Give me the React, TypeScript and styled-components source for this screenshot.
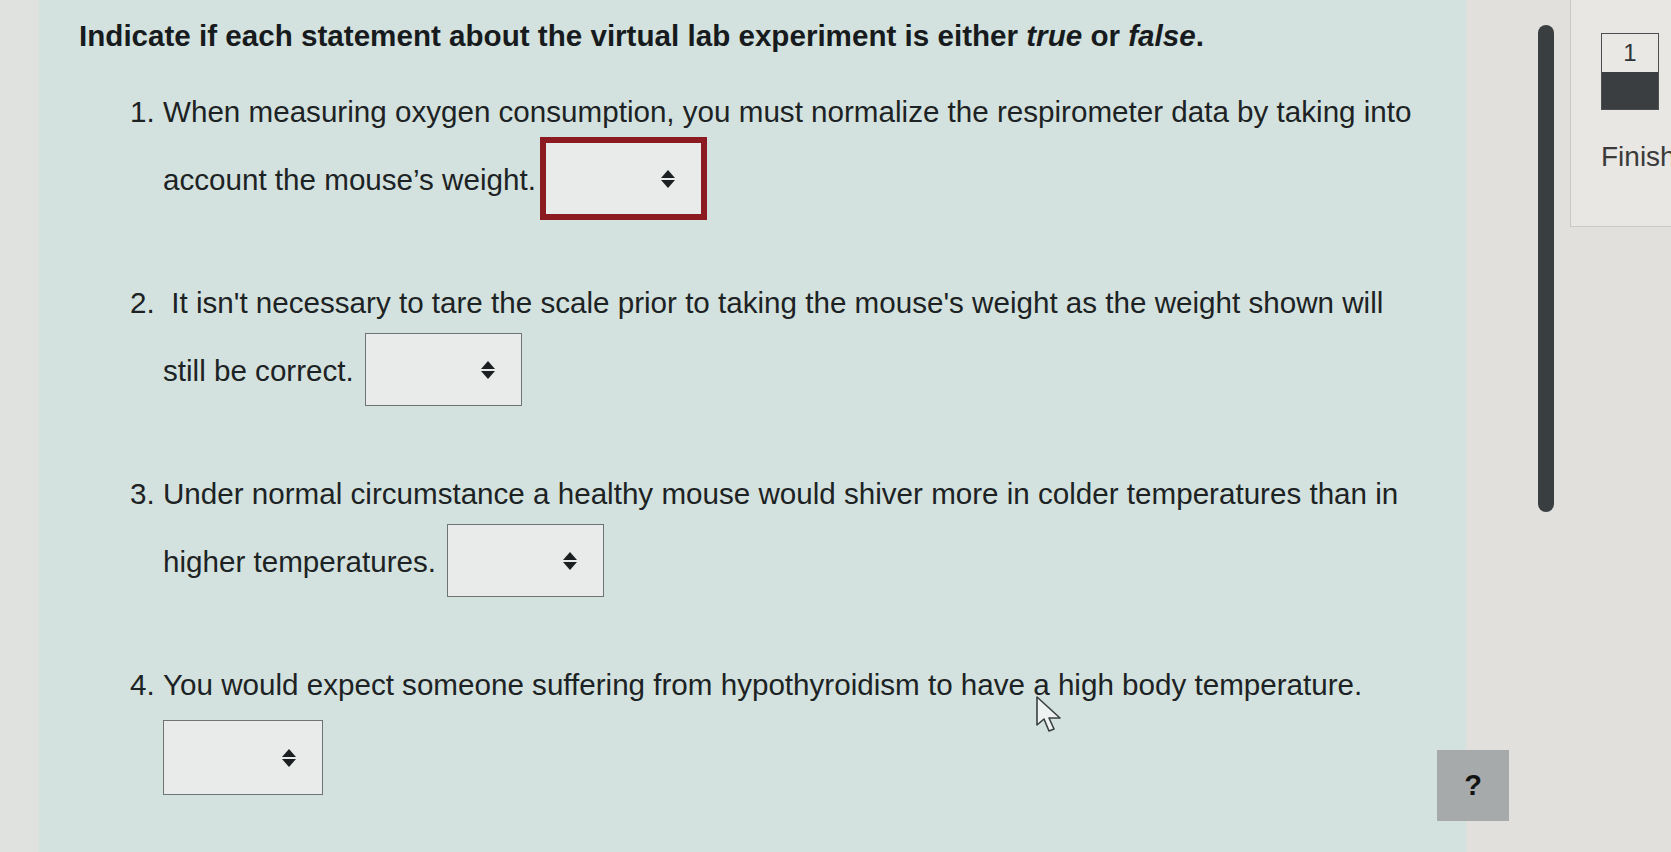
import React from "react";
import styled, { createGlobalStyle, css } from "styled-components";

const GlobalStyle = createGlobalStyle`
  html, body {
    margin: 0;
    padding: 0;
  }
  body {
    width: 1671px;
    height: 852px;
    overflow: hidden;
    background: #e1e0dc;
    font-family: "Liberation Sans", Arial, Helvetica, sans-serif;
  }
`;

const Page = styled.div`
  position: relative;
  display: flex;
  width: 1671px;
  height: 852px;
  overflow: hidden;
`;

const LeftGutter = styled.div`
  width: 39px;
  flex-shrink: 0;
  background: #dfe2df;
`;

const Main = styled.main`
  width: 1427px;
  flex-shrink: 0;
  box-sizing: border-box;
  padding: 19px 42px 0 40px;
  background: #d3e2de;
`;

const Title = styled.h1`
  margin: 0;
  font-size: 29.6px;
  line-height: 34px;
  font-weight: 700;
  color: #171b1d;
  white-space: nowrap;
`;

const QuestionList = styled.ol`
  margin: 29px 0 0;
  padding-left: 84px;
  font-size: 29.6px;
  line-height: 60px;
  color: #1d2224;
`;

const Question = styled.li`
  margin: 0 0 58px;
  padding: 0;
`;

const SelectWrap = styled.span<{ $invalid?: boolean; $ownLine?: boolean }>`
  position: relative;
  display: inline-block;
  overflow: hidden;
  vertical-align: -25px;
  width: 157px;
  height: 73px;
  margin-left: 3px;
  box-sizing: border-box;
  border: 1px solid #6e7472;
  background: #e8ebe9;
  ${(p) =>
    p.$invalid &&
    css`
      margin-left: 9px;
      border-color: #8c1b21;
      outline: 5px solid #8c1b21;
    `}
  ${(p) =>
    p.$ownLine &&
    css`
      display: block;
      margin: 5px 0 0;
      width: 160px;
      height: 75px;
    `}
`;

const NativeSelect = styled.select`
  appearance: none;
  -webkit-appearance: none;
  display: block;
  width: 100%;
  height: 100%;
  margin: 0;
  border: none;
  background: transparent;
  font: inherit;
  color: inherit;
  cursor: pointer;
  outline: none;
`;

const Arrows = styled.svg`
  position: absolute;
  right: 26px;
  top: 50%;
  transform: translateY(-50%);
  width: 14px;
  height: 18px;
  pointer-events: none;
`;

const RightArea = styled.aside`
  flex: 1;
  display: flex;
  align-items: flex-start;
  gap: 16px;
  padding-left: 72px;
  background: #e1e0dc;
  overflow: hidden;
`;

const Scrollbar = styled.div`
  flex-shrink: 0;
  width: 16px;
  height: 487px;
  margin-top: 25px;
  border-radius: 8px;
  background: #393e41;
`;

const SidePanel = styled.div`
  flex-shrink: 0;
  width: 140px;
  height: 227px;
  box-sizing: border-box;
  padding: 33px 0 0 30px;
  border: 1px solid #cac9c5;
  border-top: none;
  background: #e8e7e3;
`;

const PageBox = styled.div`
  display: flex;
  flex-direction: column;
  width: 58px;
  height: 77px;
  box-sizing: border-box;
  border: 1px solid #4b4f51;
`;

const PageNum = styled.div`
  height: 38px;
  display: flex;
  align-items: center;
  justify-content: center;
  background: #e9e8e4;
  color: #2f3335;
  font-size: 24px;
`;

const PageFill = styled.div`
  flex: 1;
  background: #3a3e41;
`;

const FinishLabel = styled.div`
  margin-top: 31px;
  font-size: 28px;
  line-height: 32px;
  color: #3a3a3a;
  white-space: nowrap;
`;

const HelpButton = styled.button`
  position: absolute;
  left: 1437px;
  top: 750px;
  width: 72px;
  height: 71px;
  margin: 0;
  padding: 0;
  border: none;
  background: #a7aaaa;
  color: #121414;
  font-family: "Liberation Sans", Arial, sans-serif;
  font-size: 29px;
  font-weight: 700;
  display: flex;
  align-items: center;
  justify-content: center;
`;

const Pointer = styled.svg`
  position: absolute;
  left: 1035px;
  top: 695px;
  width: 28px;
  height: 40px;
  pointer-events: none;
`;

const Dropdown: React.FC<{ invalid?: boolean; ownLine?: boolean }> = ({ invalid, ownLine }) => (
  <SelectWrap $invalid={invalid} $ownLine={ownLine}>
    <NativeSelect defaultValue="" aria-label="true or false">
      <option value=""></option>
      <option value="true">true</option>
      <option value="false">false</option>
    </NativeSelect>
    <Arrows viewBox="0 0 14 18">
      <polygon points="7,0 14,8 0,8" fill="#1c1f21" />
      <polygon points="0,10 14,10 7,18" fill="#1c1f21" />
    </Arrows>
  </SelectWrap>
);

export default function App() {
  return (
    <>
      <GlobalStyle />
      <Page>
        <LeftGutter />
        <Main>
          <Title>
            Indicate if each statement about the virtual lab experiment is either <i>true</i> or <i>false</i>.
          </Title>
          <QuestionList>
            <Question>
              When measuring oxygen consumption, you must normalize the respirometer data by taking into account the mouse’s weight.
              <Dropdown invalid />
            </Question>
            <Question>
              {"\u00a0"}It isn't necessary to tare the scale prior to taking the mouse's weight as the weight shown will still be correct.{" "}
              <Dropdown />
            </Question>
            <Question>
              Under normal circumstance a healthy mouse would shiver more in colder temperatures than in higher temperatures.{" "}
              <Dropdown />
            </Question>
            <Question>
              You would expect someone suffering from hypothyroidism to have a high body temperature.
              <Dropdown ownLine />
            </Question>
          </QuestionList>
        </Main>
        <RightArea>
          <Scrollbar />
          <SidePanel>
            <PageBox>
              <PageNum>1</PageNum>
              <PageFill />
            </PageBox>
            <FinishLabel>Finish</FinishLabel>
          </SidePanel>
        </RightArea>
        <HelpButton type="button">?</HelpButton>
        <Pointer viewBox="0 0 28 40">
          <path
            d="M2 2 L2 30 L9 24 L14 36 L19 34 L14 23 L25 23 Z"
            fill="#eef2f1"
            stroke="#3a3f42"
            strokeWidth="1.6"
            strokeLinejoin="round"
          />
        </Pointer>
      </Page>
    </>
  );
}
